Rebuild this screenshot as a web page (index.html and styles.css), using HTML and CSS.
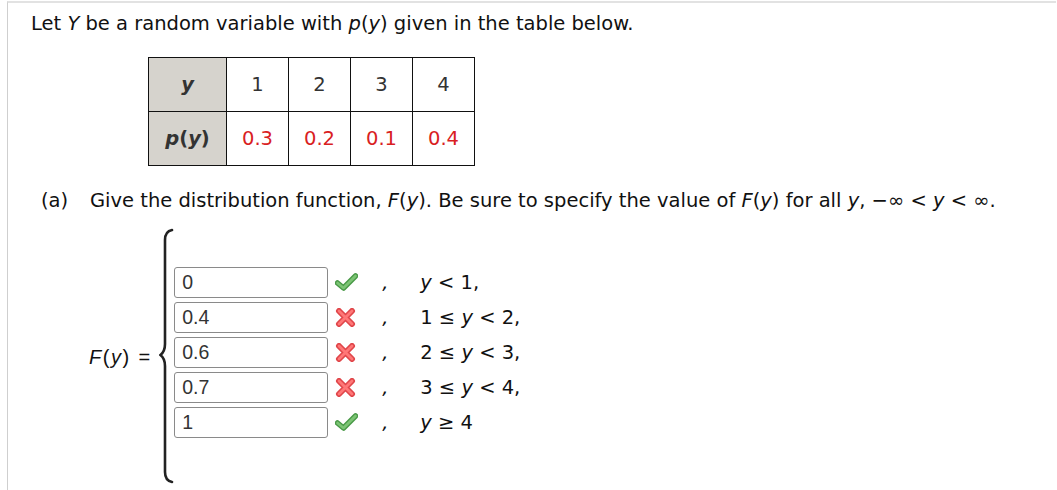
FILE: index.html
```html
<!DOCTYPE html>
<html>
<head>
<meta charset="utf-8">
<link rel="stylesheet" href="styles.css">
</head>
<body>
<div class="frame">
  <p class="intro">Let <i>Y</i> be a random variable with <i>p</i>(<i>y</i>) given in the table below.</p>
  <table class="dist">
    <tr><th><i>y</i></th><td>1</td><td>2</td><td>3</td><td>4</td></tr>
    <tr><th><i>p</i>(<i>y</i>)</th><td class="red">0.3</td><td class="red">0.2</td><td class="red">0.1</td><td class="red">0.4</td></tr>
  </table>
  <p class="part"><span class="label">(a)</span>Give the distribution function, <i>F</i>(<i>y</i>). Be sure to specify the value of <i>F</i>(<i>y</i>) for all <i>y</i>, &minus;&infin; &lt; <i>y</i> &lt; &infin;.</p>
  <div class="piece">
    <div class="lhs"><span class="fy"><i>F</i>(<i>y</i>)</span><span class="eq">=</span></div>
    <svg class="brace" width="15" height="256" viewBox="0 0 15 256">
      <path d="M13 2 C8 3 6 6 6 12 L6 116 C6 122 4 125 1.5 127 C4 129 6 132 6 138 L6 244 C6 250 8 253 13 254" fill="none" stroke="#222" stroke-width="2.6" stroke-linecap="round"/>
    </svg>
    <div class="rows">
      <div class="row"><span class="box">0</span><svg class="ic" width="23" height="18" viewBox="0 0 23 18"><path d="M2.5 10 L8.5 15 L20.5 3" fill="none" stroke="#4a9a48" stroke-width="5.5" stroke-linecap="round" stroke-linejoin="round"/><path d="M2.5 10 L8.5 15 L20.5 3" fill="none" stroke="#7cc474" stroke-width="2.6" stroke-linecap="round" stroke-linejoin="round"/></svg><span class="comma">,</span><span class="cond"><i>y</i> &lt; 1,</span></div>
      <div class="row"><span class="box">0.4</span><svg class="ic" width="23" height="19" viewBox="0 0 23 19"><path d="M4 3 L17 16 M17 3 L4 16" stroke="#e0464a" stroke-width="6" stroke-linecap="round"/><path d="M4 3 L17 16 M17 3 L4 16" stroke="#f77" stroke-width="2.8" stroke-linecap="round"/></svg><span class="comma">,</span><span class="cond">1 &le; <i>y</i> &lt; 2,</span></div>
      <div class="row"><span class="box">0.6</span><svg class="ic" width="23" height="19" viewBox="0 0 23 19"><path d="M4 3 L17 16 M17 3 L4 16" stroke="#e0464a" stroke-width="6" stroke-linecap="round"/><path d="M4 3 L17 16 M17 3 L4 16" stroke="#f77" stroke-width="2.8" stroke-linecap="round"/></svg><span class="comma">,</span><span class="cond">2 &le; <i>y</i> &lt; 3,</span></div>
      <div class="row"><span class="box">0.7</span><svg class="ic" width="23" height="19" viewBox="0 0 23 19"><path d="M4 3 L17 16 M17 3 L4 16" stroke="#e0464a" stroke-width="6" stroke-linecap="round"/><path d="M4 3 L17 16 M17 3 L4 16" stroke="#f77" stroke-width="2.8" stroke-linecap="round"/></svg><span class="comma">,</span><span class="cond">3 &le; <i>y</i> &lt; 4,</span></div>
      <div class="row"><span class="box">1</span><svg class="ic" width="23" height="18" viewBox="0 0 23 18"><path d="M2.5 10 L8.5 15 L20.5 3" fill="none" stroke="#4a9a48" stroke-width="5.5" stroke-linecap="round" stroke-linejoin="round"/><path d="M2.5 10 L8.5 15 L20.5 3" fill="none" stroke="#7cc474" stroke-width="2.6" stroke-linecap="round" stroke-linejoin="round"/></svg><span class="comma">,</span><span class="cond"><i>y</i> &ge; 4</span></div>
    </div>
  </div>
</div>
</body>
</html>
```
FILE: styles.css
```css
html, body {
  margin: 0;
  padding: 0;
  background: #fff;
}
body {
  font-family: "DejaVu Sans", Verdana, sans-serif;
  font-size: 19.5px;
  color: #111;
}
.frame {
  margin: 1px 1px 0 7px;
  border-top: 2px solid #e2e2e2;
  border-left: 1px solid #cfcfcf;
  padding: 0 0 0 23px;
  height: 489px;
  box-sizing: border-box;
}
.intro {
  margin: 0;
  padding-top: 9px;
  line-height: 24px;
}
.dist {
  border-collapse: collapse;
  margin: 21px 0 0 117px;
}
.dist th, .dist td {
  border: 1px solid #111;
  height: 53px;
  padding: 0;
  text-align: center;
  color: #333;
  font-weight: normal;
}
.dist th {
  width: 77px;
  background: #d6d3cd;
  font-weight: bold;
}
.dist td { width: 61px; }
.dist .red { color: #d9211f; }
.part {
  margin: 23px 0 0 10px;
  line-height: 24px;
  color: #111;
}
.part .label {
  display: inline-block;
  width: 49px;
}
.piece {
  display: flex;
  align-items: center;
  margin: 15px 0 0 58px;
}
.lhs {
  display: flex;
  align-items: center;
  font-family: "Liberation Sans", Arial, sans-serif;
  font-size: 20px;
  color: #111;
  margin-right: 9px;
  padding-top: 2px;
}
.fy { letter-spacing: 1.5px; }
.eq { margin-left: 8px; }
.brace { display: block; }
.rows {
  display: flex;
  flex-direction: column;
  gap: 4px;
  margin-bottom: 8px;
}
.row {
  display: flex;
  align-items: center;
  height: 31px;
}
.box {
  box-sizing: border-box;
  width: 154px;
  height: 31px;
  border: 1px solid #8a8a8a;
  border-radius: 3px;
  font-family: "Liberation Sans", Arial, sans-serif;
  font-size: 19.5px;
  line-height: 22px;
  color: #333;
  padding: 3px 0 0 7px;
}
.ic { margin-left: 7px; }
.comma {
  width: 10px;
  margin-left: 24px;
  font-style: italic;
}
.cond { margin-left: 28px; }
```
